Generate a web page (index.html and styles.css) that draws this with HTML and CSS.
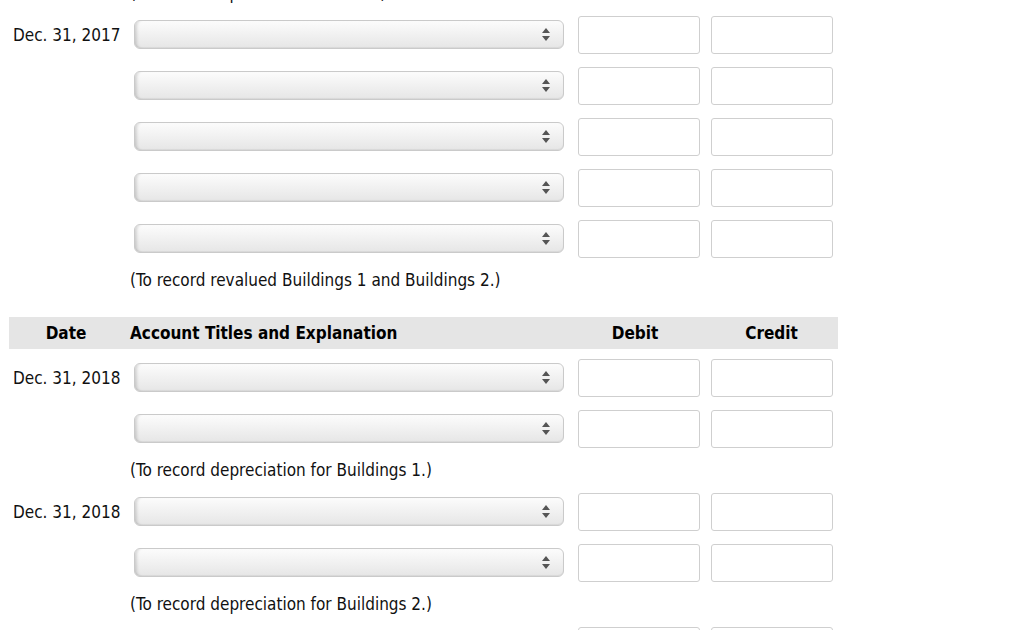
FILE: index.html
```html
<!DOCTYPE html>
<html lang="en">
<head>
<meta charset="utf-8">
<title>Journal entries</title>
<link rel="stylesheet" href="styles.css">
</head>
<body>
<div class="page">
  <div class="expl-row"><span class="expl">(To record depreciation for 2017.)</span></div>

  <div class="row">
    <div class="date">Dec. 31, 2017</div>
    <div class="select"><svg class="arrows" width="8" height="13" viewBox="0 0 8 13"><path d="M4 0 L8 5 L0 5 Z M0 8 L8 8 L4 13 Z" fill="#555"/></svg></div>
    <input class="debit" type="text">
    <input class="credit" type="text">
  </div>
  <div class="row">
    <div class="date"></div>
    <div class="select"><svg class="arrows" width="8" height="13" viewBox="0 0 8 13"><path d="M4 0 L8 5 L0 5 Z M0 8 L8 8 L4 13 Z" fill="#555"/></svg></div>
    <input class="debit" type="text">
    <input class="credit" type="text">
  </div>
  <div class="row">
    <div class="date"></div>
    <div class="select"><svg class="arrows" width="8" height="13" viewBox="0 0 8 13"><path d="M4 0 L8 5 L0 5 Z M0 8 L8 8 L4 13 Z" fill="#555"/></svg></div>
    <input class="debit" type="text">
    <input class="credit" type="text">
  </div>
  <div class="row">
    <div class="date"></div>
    <div class="select"><svg class="arrows" width="8" height="13" viewBox="0 0 8 13"><path d="M4 0 L8 5 L0 5 Z M0 8 L8 8 L4 13 Z" fill="#555"/></svg></div>
    <input class="debit" type="text">
    <input class="credit" type="text">
  </div>
  <div class="row">
    <div class="date"></div>
    <div class="select"><svg class="arrows" width="8" height="13" viewBox="0 0 8 13"><path d="M4 0 L8 5 L0 5 Z M0 8 L8 8 L4 13 Z" fill="#555"/></svg></div>
    <input class="debit" type="text">
    <input class="credit" type="text">
  </div>
  <div class="expl-row"><span class="expl">(To record revalued Buildings 1 and Buildings 2.)</span></div>

  <div class="head">
    <div class="h-date">Date</div>
    <div class="h-acct">Account Titles and Explanation</div>
    <div class="h-debit">Debit</div>
    <div class="h-credit">Credit</div>
  </div>

  <div class="row">
    <div class="date">Dec. 31, 2018</div>
    <div class="select"><svg class="arrows" width="8" height="13" viewBox="0 0 8 13"><path d="M4 0 L8 5 L0 5 Z M0 8 L8 8 L4 13 Z" fill="#555"/></svg></div>
    <input class="debit" type="text">
    <input class="credit" type="text">
  </div>
  <div class="row">
    <div class="date"></div>
    <div class="select"><svg class="arrows" width="8" height="13" viewBox="0 0 8 13"><path d="M4 0 L8 5 L0 5 Z M0 8 L8 8 L4 13 Z" fill="#555"/></svg></div>
    <input class="debit" type="text">
    <input class="credit" type="text">
  </div>
  <div class="expl-row"><span class="expl">(To record depreciation for Buildings 1.)</span></div>

  <div class="row">
    <div class="date">Dec. 31, 2018</div>
    <div class="select"><svg class="arrows" width="8" height="13" viewBox="0 0 8 13"><path d="M4 0 L8 5 L0 5 Z M0 8 L8 8 L4 13 Z" fill="#555"/></svg></div>
    <input class="debit" type="text">
    <input class="credit" type="text">
  </div>
  <div class="row">
    <div class="date"></div>
    <div class="select"><svg class="arrows" width="8" height="13" viewBox="0 0 8 13"><path d="M4 0 L8 5 L0 5 Z M0 8 L8 8 L4 13 Z" fill="#555"/></svg></div>
    <input class="debit" type="text">
    <input class="credit" type="text">
  </div>
  <div class="expl-row"><span class="expl">(To record depreciation for Buildings 2.)</span></div>

  <div class="row">
    <div class="date"></div>
    <div class="select"><svg class="arrows" width="8" height="13" viewBox="0 0 8 13"><path d="M4 0 L8 5 L0 5 Z M0 8 L8 8 L4 13 Z" fill="#555"/></svg></div>
    <input class="debit" type="text">
    <input class="credit" type="text">
  </div>
</div>
</body>
</html>
```

FILE: styles.css
```css
html, body {
  margin: 0;
  padding: 0;
  background: #ffffff;
}

body {
  font-family: "DejaVu Sans Condensed", "DejaVu Sans", Verdana, sans-serif;
  font-size: 17px;
  color: #111111;
  overflow: hidden;
}

.page {
  margin-top: -23px;
  padding-left: 9px;
}

.row {
  display: flex;
  align-items: center;
  height: 51px;
}

.date {
  width: 121px;
  padding-left: 4px;
  white-space: nowrap;
}

.select {
  box-sizing: border-box;
  width: 430px;
  height: 29px;
  border: 1px solid #cacaca;
  border-radius: 6px;
  background: linear-gradient(to bottom, #fcfcfc 0%, #f2f2f2 45%, #e6e6e6 100%);
  box-shadow: inset 4px 0 3px -2px rgba(0, 0, 0, 0.14), inset 0 -1px 1px rgba(0, 0, 0, 0.06);
  display: flex;
  align-items: center;
  justify-content: flex-end;
  padding-right: 13px;
}

.arrows {
  display: block;
}

.debit, .credit {
  box-sizing: border-box;
  width: 122px;
  height: 38px;
  border: 1px solid #cfcfcf;
  border-radius: 3px;
  background: #ffffff;
  margin: 0;
  padding: 0 6px;
  font: inherit;
}

.debit {
  margin-left: 14px;
}

.credit {
  margin-left: 11px;
}

.expl-row {
  height: 32px;
  display: flex;
  align-items: center;
  padding-left: 121px;
}

.expl {
  white-space: nowrap;
}

.head {
  margin-top: 21px;
  margin-bottom: 3px;
  width: 829px;
  height: 32px;
  background: #e5e5e5;
  display: flex;
  align-items: center;
  font-weight: bold;
  color: #000000;
}

.h-date {
  width: 114px;
  text-align: center;
}

.h-acct {
  box-sizing: border-box;
  width: 447px;
  padding-left: 7px;
}

.h-debit {
  width: 130px;
  text-align: center;
}

.h-credit {
  margin-left: 5px;
  width: 133px;
  text-align: center;
}
```
